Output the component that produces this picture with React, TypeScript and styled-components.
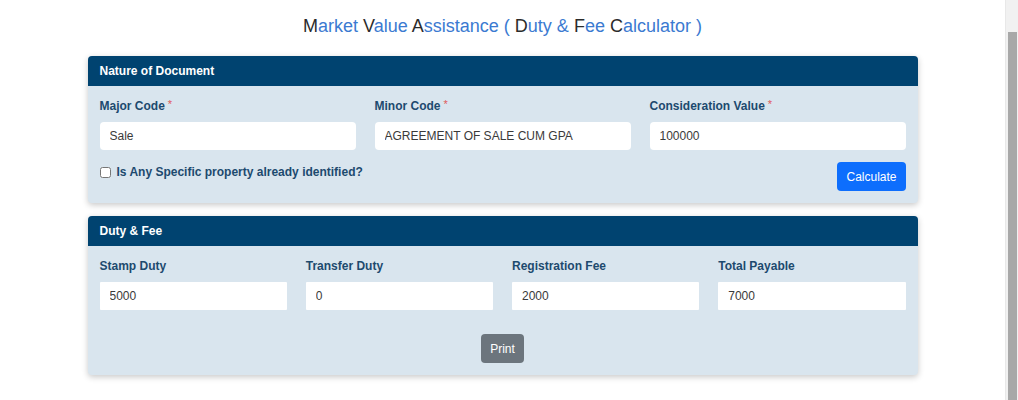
import React from 'react';
import styled, {createGlobalStyle} from 'styled-components';

const GlobalStyle = createGlobalStyle`
  html, body {
    margin: 0;
    padding: 0;
    background: #ffffff;
    font-family: "Liberation Sans", Arial, sans-serif;
  }
  body {
    padding-right: 13px;
  }
`;

const Page = styled.div`
  display: flex;
  flex-direction: column;
  align-items: center;
  padding-top: 15px;
`;

const Heading = styled.h1`
  margin: 0 0 19px;
  font-size: 18px;
  font-weight: 400;
  line-height: 22px;
  color: #3b7ad1;
`;

const Cap = styled.span`
  color: #2b2b2b;
`;

const Card = styled.section`
  width: 830px;
  border-radius: 4px;
  background: #d9e5ee;
  box-shadow: 0 2px 6px rgba(0, 0, 0, 0.22);
  margin-bottom: 13px;
  overflow: hidden;
`;

const CardHeader = styled.div`
  height: 30px;
  display: flex;
  align-items: center;
  padding: 0 12px;
  background: #004370;
  color: #ffffff;
  font-size: 12px;
  font-weight: 700;
`;

const CardBody = styled.div`
  padding: 12px;
`;

const FieldGrid = styled.div<{$cols: number}>`
  display: grid;
  grid-template-columns: repeat(${p => p.$cols}, 1fr);
  column-gap: 19px;
`;

const Field = styled.div`
  display: flex;
  flex-direction: column;
`;

const Label = styled.label`
  font-size: 12px;
  font-weight: 700;
  color: #1d4a6e;
  line-height: 16px;
  margin-bottom: 8px;
`;

const Required = styled.span`
  color: #e05a5a;
  font-weight: 400;
  font-size: 11px;
  vertical-align: top;
  line-height: 12px;
  margin-left: 3px;
`;

const Input = styled.input<{$square?: boolean}>`
  height: 28px;
  box-sizing: border-box;
  border: none;
  border-radius: ${p => (p.$square ? '1px' : '4px')};
  background: #ffffff;
  padding: 0 10px;
  font-family: inherit;
  font-size: 12px;
  color: #3a3a3a;
  outline: none;
`;

const ActionRow = styled.div`
  display: flex;
  align-items: flex-start;
  justify-content: space-between;
  margin-top: 12px;
`;

const CheckLabel = styled.label`
  display: flex;
  align-items: center;
  gap: 6px;
  font-size: 12px;
  font-weight: 700;
  color: #1d4a6e;
  margin-top: 3px;
`;

const Check = styled.input`
  margin: 0;
  width: 11px;
  height: 11px;
`;

const Button = styled.button<{$tone: 'primary' | 'secondary'}>`
  height: 29px;
  padding: 0 9px;
  border: none;
  border-radius: 4px;
  font-family: inherit;
  font-size: 12px;
  color: #ffffff;
  background: ${p => (p.$tone === 'primary' ? '#0d6efd' : '#6c757d')};
  cursor: pointer;
`;

const Centered = styled.div`
  display: flex;
  justify-content: center;
  margin-top: 24px;
`;

const Scrollbar = styled.div`
  position: fixed;
  top: 0;
  right: 0;
  width: 13px;
  height: 100%;
  background: #f1f1f1;
  border-left: 1px solid #e8e8e8;
  box-sizing: border-box;
`;

const Thumb = styled.div`
  position: absolute;
  top: 32px;
  bottom: 0;
  left: 2px;
  width: 9px;
  background: #a8a8a8;
`;

const fees = [
  {label: 'Stamp Duty', value: '5000'},
  {label: 'Transfer Duty', value: '0'},
  {label: 'Registration Fee', value: '2000'},
  {label: 'Total Payable', value: '7000'},
];

export default function App() {
  return (
    <>
      <GlobalStyle />
      <Page>
        <Heading>
          <Cap>M</Cap>arket <Cap>V</Cap>alue <Cap>A</Cap>ssistance ( <Cap>D</Cap>uty &amp; <Cap>F</Cap>ee <Cap>C</Cap>alculator )
        </Heading>

        <Card>
          <CardHeader>Nature of Document</CardHeader>
          <CardBody>
            <FieldGrid $cols={3}>
              <Field>
                <Label>Major Code<Required>*</Required></Label>
                <Input defaultValue="Sale" />
              </Field>
              <Field>
                <Label>Minor Code<Required>*</Required></Label>
                <Input defaultValue="AGREEMENT OF SALE CUM GPA" />
              </Field>
              <Field>
                <Label>Consideration Value<Required>*</Required></Label>
                <Input defaultValue="100000" />
              </Field>
            </FieldGrid>
            <ActionRow>
              <CheckLabel>
                <Check type="checkbox" />
                Is Any Specific property already identified?
              </CheckLabel>
              <Button $tone="primary">Calculate</Button>
            </ActionRow>
          </CardBody>
        </Card>

        <Card>
          <CardHeader>Duty &amp; Fee</CardHeader>
          <CardBody>
            <FieldGrid $cols={4}>
              {fees.map(f => (
                <Field key={f.label}>
                  <Label>{f.label}</Label>
                  <Input $square defaultValue={f.value} />
                </Field>
              ))}
            </FieldGrid>
            <Centered>
              <Button $tone="secondary">Print</Button>
            </Centered>
          </CardBody>
        </Card>
      </Page>
      <Scrollbar>
        <Thumb />
      </Scrollbar>
    </>
  );
}
